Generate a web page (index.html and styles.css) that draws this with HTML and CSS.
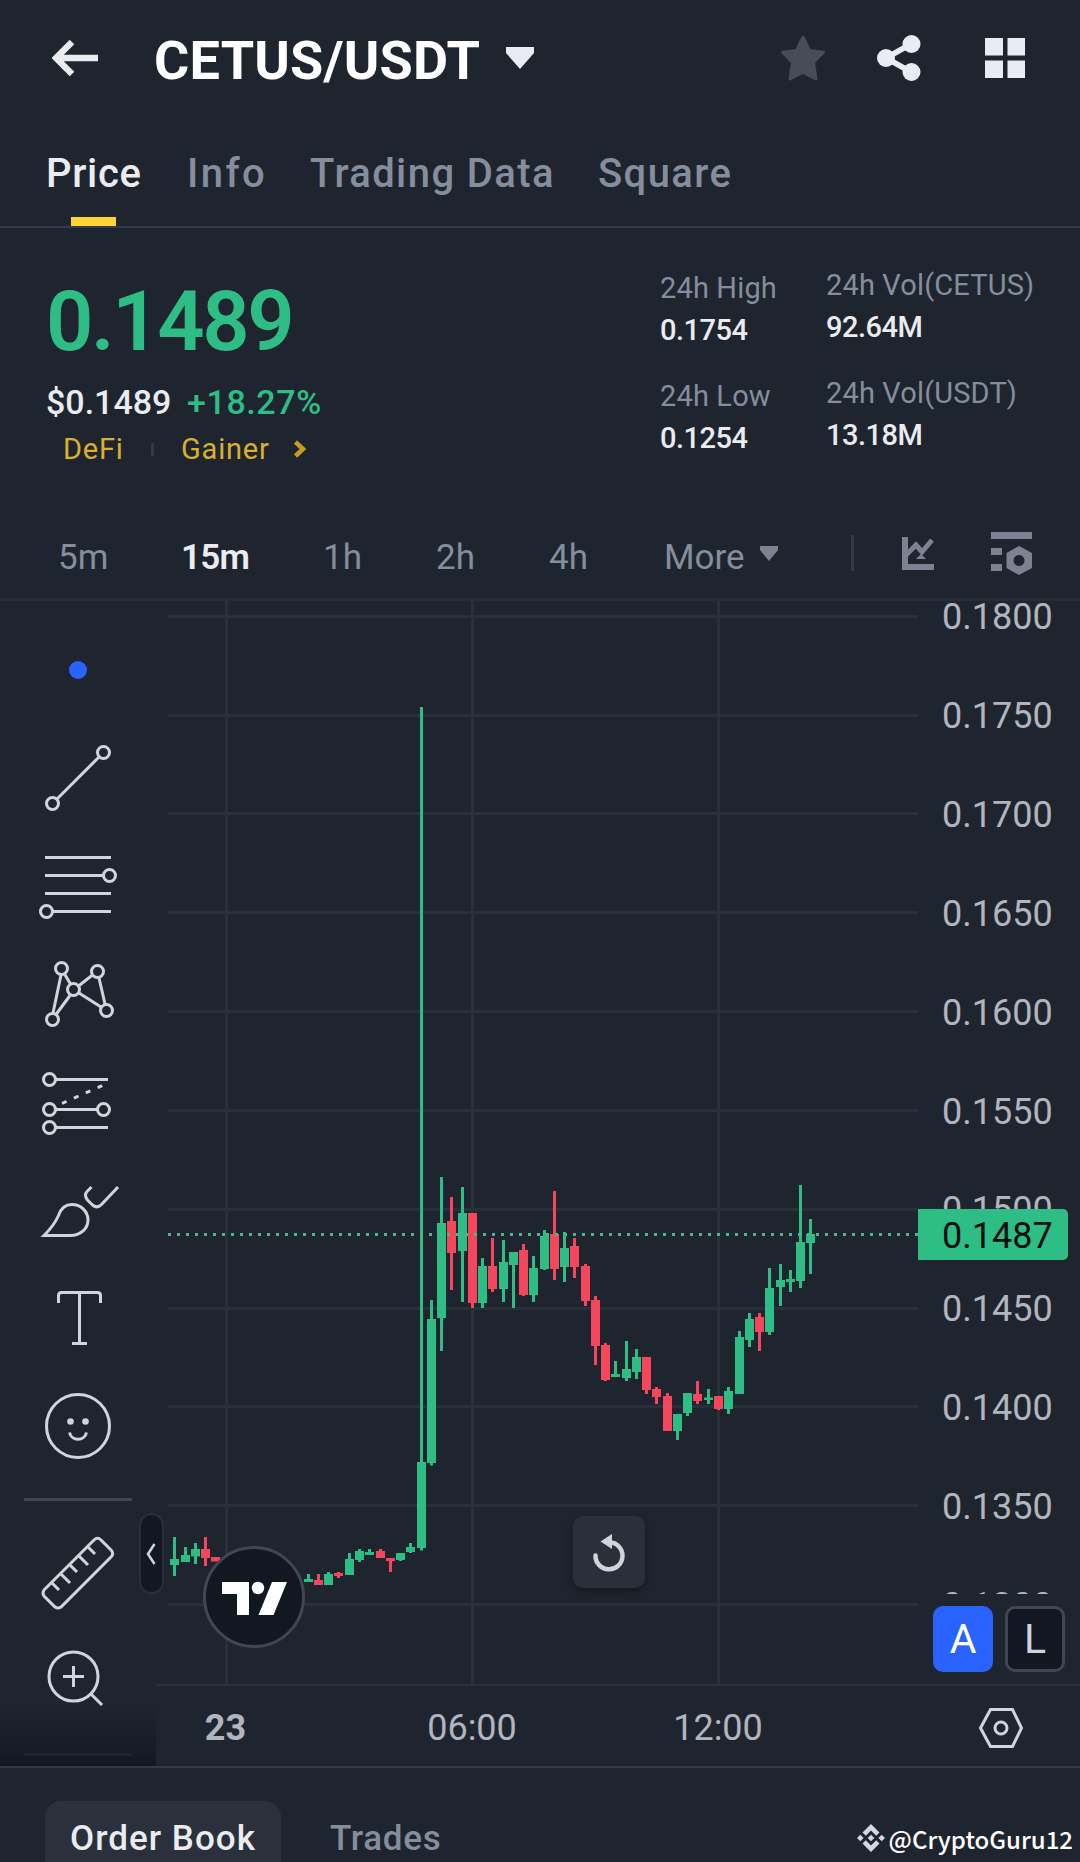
FILE: index.html
```
<!DOCTYPE html>
<html lang="en">
<head>
  <meta charset="UTF-8">
  <meta name="viewport" content="width=device-width, initial-scale=1.0">
  <title>CETUS/USDT</title>
  <link rel="stylesheet" href="styles.css">
</head>
<body>

  <!-- Header -->
  <header class="header">
    <svg class="back" width="46" height="38" viewBox="0 0 46 38"><path d="M46 19H5M20 3L4 19l16 16" fill="none" stroke="#eaecef" stroke-width="6.5"/></svg>
    <h1>CETUS/USDT</h1>
    <svg class="caret" width="28" height="22" viewBox="0 0 28 22"><path d="M0 0h28v6L14 22 0 6z" fill="#eaecf3"/></svg>
    <div class="header-icons">
      <svg width="46" height="48" viewBox="0 0 46 48"><path d="M23 3l6.5 13.5 14 1.7-10 10.2 2.5 16.6L23 38.500 10 45l2.500-16.600L2.500 18.200l14-1.700z" fill="#474d57" stroke="#474d57" stroke-width="3" stroke-linejoin="round"/></svg>
      <svg width="44" height="48" viewBox="0 0 44 48"><path d="M34 10L9 24l25 14" fill="none" stroke="#eaecf3" stroke-width="5.500"/><circle cx="34.500" cy="10" r="9" fill="#eaecf3"/><circle cx="9" cy="24" r="9" fill="#eaecf3"/><circle cx="34.500" cy="38" r="9" fill="#eaecf3"/></svg>
      <svg width="40" height="40" viewBox="0 0 40 40"><path d="M0 0h18v17.500H0zM22.500 0h17.500v17.500H22.500zM0 22.500h18V40H0zM22.500 22.500h17.500V40H22.500z" fill="#eaecf3"/></svg>
    </div>
  </header>

  <!-- Tabs -->
  <nav class="tabs">
    <a class="tab active">Price</a>
    <a class="tab info-tab">Info</a>
    <a class="tab data-tab">Trading Data</a>
    <a class="tab square-tab">Square</a>
  </nav>

  <!-- Price summary -->
  <section class="summary">
    <div class="price-box">
      <div class="price">0.1489</div>
      <div class="change"><span class="usd">$0.1489</span><span class="percent">+18.27%</span></div>
      <div class="tags">
        <span class="tag-defi">DeFi</span>
        <i class="tag-line"></i>
        <span class="tag-gainer">Gainer</span>
        <svg width="14" height="18" viewBox="0 0 14 18"><path d="M2.500 2l7.500 7-7.500 7" fill="none" stroke="#c99a22" stroke-width="4.500"/></svg>
      </div>
    </div>
    <div class="stats">
      <div class="label">24h High</div>
      <div class="value">0.1754</div>
      <div class="label second">24h Low</div>
      <div class="value">0.1254</div>
    </div>
    <div class="stats volume">
      <div class="label">24h Vol(CETUS)</div>
      <div class="value">92.64M</div>
      <div class="label second">24h Vol(USDT)</div>
      <div class="value">13.18M</div>
    </div>
  </section>

  <!-- Timeframes -->
  <div class="timeframes">
    <span>5m</span>
    <span class="active">15m</span>
    <span>1h</span>
    <span>2h</span>
    <span>4h</span>
    <span class="more">More <svg width="18" height="15" viewBox="0 0 18 15"><path d="M0 0h18v4L9 15 0 4z" fill="#7c8291"/></svg></span>
    <i class="bar-line"></i>
    <svg class="chart-type" width="32" height="33" viewBox="0 0 32 33"><path d="M0 0h6v27h26v6H0z" fill="#7c8291"/><path d="M4 18L14 8l6 7L30 3" fill="none" stroke="#7c8291" stroke-width="5"/><path d="M14 22l5-5 5 5z" fill="#7c8291"/></svg>
    <svg class="chart-settings" width="41" height="43" viewBox="0 0 41 43"><path fill="#7c8291" fill-rule="evenodd" d="M0 0h41v7H0zM0 16h11v7H0zM0 32h11v7H0zM28 14l13 7v15l-13 7-12.500-7V21zM28 23a5.500 5.500 0 1 0 .1 0z"/></svg>
  </div>

  <!-- Chart -->
  <main class="chart">
    <aside class="tools">
      <svg width="156" height="108" viewBox="0 0 156 108"><circle cx="78" cy="54" r="9" fill="#2962ff"/></svg>
      <svg class="tool" width="156" height="108" viewBox="0 0 156 108"><circle cx="52.500" cy="79.500" r="6"/><circle cx="103.500" cy="28.500" r="6"/><path d="M57 75l42-42"/></svg>
      <svg class="tool" width="156" height="108" viewBox="0 0 156 108"><path d="M45 25.500h66M45 43.500h58M45 61.500h66M53 79.500h58"/><circle cx="109.500" cy="43.500" r="6"/><circle cx="46.500" cy="79.500" r="6"/></svg>
      <svg class="tool" width="156" height="108" viewBox="0 0 156 108"><circle cx="61.500" cy="28.500" r="6"/><circle cx="97.500" cy="31.500" r="6"/><circle cx="73.500" cy="49.500" r="6"/><circle cx="106.500" cy="70.500" r="6"/><circle cx="52.500" cy="79.500" r="6"/><path d="M61 35l-8 38M64.500 34l6 10M56 74.500l14-19M78.500 46l14-11M79 53l22 14M99 38l6 26"/></svg>
      <svg class="tool" width="156" height="108" viewBox="0 0 156 108"><path d="M56 31.500h52M56 61.500h41M56 79.500h52"/><circle cx="49.500" cy="31.500" r="6"/><circle cx="49.500" cy="61.500" r="6"/><circle cx="103.500" cy="61.500" r="6"/><circle cx="49.500" cy="79.500" r="6"/><path d="M62 55.500l43-19" stroke-dasharray="5 8"/></svg>
      <svg class="tool" width="156" height="108" viewBox="0 0 156 108"><path d="M44 79.500c7-7 11-12 14.500-20C61 52 66 48.500 72 48.500c9 0 16 7 16 15.500S81 79.500 70 79.500z"/><path d="M91.500 31l-4 4c-3 3-2.500 6 0 9l5 5c3 2.500 6 2.500 9-.500L118 31"/></svg>
      <svg class="tool" width="156" height="108" viewBox="0 0 156 108"><path d="M58.500 39v-7.500q0-3 3-3h36q3 0 3 3V39M79.500 28.500v51M72 79.500h15"/></svg>
      <svg class="tool" width="156" height="108" viewBox="0 0 156 108"><circle cx="78" cy="54" r="31.500"/><path d="M69.500 60.500a8.700 8.700 0 0 0 17 0"/><circle class="dot" cx="70.500" cy="49.500" r="3.300"/><circle class="dot" cx="85.500" cy="49.500" r="3.300"/></svg>
      <i class="tools-line"></i>
      <svg class="tool" width="156" height="108" viewBox="0 0 156 108"><path d="M44 71l50-50q3.500-3.500 7 0l10 10q3.500 3.500 0 7L61 88q-3 2-6 0L44 77q-2-3 0-6zM52 64l7 7M61 55l9 9M70 46l7 7M79 37l9 9M88 28l7 7"/></svg>
      <svg class="tool" width="156" height="108" viewBox="0 0 156 108"><circle cx="73.500" cy="49.500" r="24.500"/><path d="M63 49.500h21M73.500 39v21M91 67l11 11"/></svg>
      <div class="tools-fade"><i class="tools-line"></i></div>
    </aside>

    <div class="plot">
      <svg width="762" height="1083" viewBox="156 601 762 1083">
        <!-- Grid -->
        <path class="grid" d="M168 616.500h750M168 715.500h750M168 813.500h750M168 912.500h750M168 1011.500h750M168 1110.500h750M168 1209.500h750M168 1308.500h750M168 1406.500h750M168 1505.500h750M168 1604.500h750M226.500 598v1088M472.500 598v1088M718.500 598v1088"/>
        <!-- Rising candles -->
        <path class="wick up" d="M174.500 1537V1576M185.500 1547V1562M195.500 1543V1564M308.500 1574V1582M328.500 1572V1585M349.500 1553V1575M359.500 1549V1562M369.500 1549V1555M400.500 1553V1561M410.500 1543V1553M421.500 707V1550.500M431.500 1300V1465.500M441.500 1177V1351M462.500 1187V1302M482.500 1258V1308M503.500 1240V1302M513.500 1252V1308M533.500 1256V1302M544.500 1230V1270M564.500 1232V1282M615.500 1361V1377M626.500 1341V1381M636.500 1349V1379M677.500 1414V1440M687.500 1393V1416M708.500 1389V1404M728.500 1387V1414M739.500 1331V1394M749.500 1313V1347M769.500 1268V1335M780.500 1264V1306M790.500 1270V1292M800.500 1185V1288M810.500 1219V1274"/>
        <path class="candle up" d="M174.500 1559V1565M185.500 1555V1562M195.500 1549V1556.500M308.500 1579V1582M328.500 1574V1585M349.500 1559V1575M359.500 1551V1560M369.500 1552V1555M400.500 1553V1560M410.500 1547V1552M421.500 1462V1548M431.500 1319V1463M441.500 1223V1318M462.500 1213V1251M482.500 1266V1303M503.500 1262V1289M513.500 1252V1265M533.500 1268V1295M544.500 1236V1269M564.500 1248V1267M615.500 1374V1377M626.500 1369V1378M636.500 1357V1372M677.500 1414V1431M687.500 1393V1413M708.500 1397.500V1400M728.500 1391V1409M739.500 1337V1394M749.500 1319V1340M769.500 1288V1332M780.500 1280V1287M790.500 1279V1282M800.500 1242V1281M810.500 1234V1243"/>
        <!-- Falling candles -->
        <path class="wick down" d="M205.500 1537V1566M318.500 1574V1585M338.500 1572V1578M380.500 1549V1558M390.500 1558V1572M451.500 1197V1290M472.500 1213V1308M492.500 1238V1292M523.500 1244V1296M554.500 1191V1280M574.500 1238V1278M585.500 1264V1306M595.500 1296V1365M605.500 1343V1381M646.500 1357V1394M656.500 1387V1404M667.500 1393V1431M697.500 1381V1404M718.500 1396V1410M759.500 1313V1351"/>
        <path class="candle down" d="M205.500 1549V1558M215.500 1557V1561.500M318.500 1580V1585M338.500 1573V1576M380.500 1551V1558M390.500 1558V1561M451.500 1221V1253M472.500 1213V1303M492.500 1266V1289M523.500 1250V1295M554.500 1234V1269M574.500 1246V1267M585.500 1266V1301M595.500 1300V1346M605.500 1345V1380M646.500 1357V1390M656.500 1389V1397M667.500 1396V1431M697.500 1394V1401M718.500 1396V1409M759.500 1317V1332"/>
        <!-- Last price -->
        <path d="M168 1234.500h750" stroke="#4bb58c" stroke-width="3" stroke-dasharray="3 6"/>
      </svg>
      <svg class="logo" width="102" height="102" viewBox="0 0 102 102"><circle cx="51" cy="51" r="49.500" fill="#131722" stroke="#434651" stroke-width="3"/><path d="M19 36h27v33H34V48H19zM69 36h15L70.500 69H55.500z" fill="#fff"/><circle cx="55" cy="42" r="6.200" fill="#fff"/></svg>
      <div class="reset"><svg width="36" height="40" viewBox="0 0 36 40"><path d="M4.500 22.500a13.500 13.500 0 1 0 14-13.200" fill="none" stroke="#d1d4dc" stroke-width="4.500" stroke-linecap="round"/><path d="M9.500 8.500L21 1v15z" fill="#d1d4dc"/></svg></div>
    </div>

    <div class="price-axis">
      <div class="prices">
        <span>0.1800</span>
        <span>0.1750</span>
        <span>0.1700</span>
        <span>0.1650</span>
        <span>0.1600</span>
        <span>0.1550</span>
        <span>0.1500</span>
        <span>0.1450</span>
        <span>0.1400</span>
        <span>0.1350</span>
        <span>0.1300</span>
      </div>
      <div class="last-price">0.1487</div>
      <div class="scale-buttons">
        <button class="auto">A</button>
        <button class="log">L</button>
      </div>
    </div>

    <div class="time-axis">
      <b>23</b>
      <span>06:00</span>
      <span>12:00</span>
    </div>
    <div class="axis-settings"><svg width="46" height="42" viewBox="0 0 46 42"><path d="M12.500 2.500h22L43.500 21l-9 18.500h-22L2.500 21z" fill="none" stroke="#d1d4dc" stroke-width="3"/><circle cx="23" cy="21" r="6" fill="none" stroke="#d1d4dc" stroke-width="3"/></svg></div>

    <div class="collapse"><svg width="10" height="22" viewBox="0 0 10 22"><path d="M8.500 1L2 11l6.500 10" fill="none" stroke="#d1d4dc" stroke-width="2.500"/></svg></div>
  </main>

  <!-- Bottom tabs -->
  <footer class="bottom">
    <div class="order-book">Order Book</div>
    <div class="trades">Trades</div>
    <div class="author">
      <svg width="28" height="28" viewBox="0 0 28 28"><path d="M14 0l8.500 8.500-3.300 3.300L14 6.600l-5.200 5.200-3.300-3.300zM14 28l8.500-8.500-3.300-3.300L14 21.400l-5.200-5.200-3.300 3.300zM14 10.700l3.300 3.300-3.300 3.300-3.300-3.300zM3.300 10.700L6.600 14l-3.300 3.300L0 14zM24.700 10.700L28 14l-3.300 3.300-3.300-3.300z" fill="#d5d8e2"/></svg>
      <span>@CryptoGuru12</span>
    </div>
  </footer>

</body>
</html>
```
FILE: styles.css
```
/* Basic Reset */
* {
  margin: 0;
  padding: 0;
  box-sizing: border-box;
}

body {
  width: 1080px;
  height: 1862px;
  overflow: hidden;
  background-color: #1f252f;
  color: #eaecef;
  font-family: Roboto, "Liberation Sans", sans-serif;
}

svg {
  display: block;
  flex-shrink: 0;
}

span, .label, .value, .tab {
  white-space: nowrap;
}

/* Header */
.header {
  height: 116px;
  padding: 0 55px 0 52px;
  display: flex;
  align-items: center;
}

.header h1 {
  width: 348px;
  margin-left: 56px;
  padding-top: 5px;
  font-size: 54px;
  font-weight: 700;
  letter-spacing: 0.2px;
  color: #fff;
}

.caret {
  margin-left: 4px;
}

.header-icons {
  margin-left: auto;
  display: flex;
  align-items: center;
}

.header-icons svg + svg {
  margin-left: 51px;
}

.header-icons svg:last-child {
  margin-left: 64px;
}

/* Tabs */
.tabs {
  height: 112px;
  padding-left: 46px;
  display: flex;
  border-bottom: 2px solid #343a44;
}

.tab {
  height: 110px;
  padding-top: 5px;
  line-height: 106px;
  font-size: 40px;
  font-weight: 500;
  letter-spacing: 1.4px;
  color: #848e9c;
}

.tab.active {
  width: 141px;
  letter-spacing: 0.7px;
  color: #eaecef;
  background: linear-gradient(#fcd535, #fcd535) 25px 101px / 45px 9px no-repeat;
}

.info-tab {
  width: 123px;
  letter-spacing: 2.4px;
}

.data-tab {
  width: 288px;
}

/* Price summary */
.summary {
  height: 288px;
  padding-left: 46px;
  display: grid;
  grid-template-columns: 614px 166px 1fr;
}

.price-box {
  padding-top: 49px;
}

.price {
  height: 90px;
  line-height: 90px;
  font-size: 83px;
  font-weight: 600;
  letter-spacing: -2.4px;
  color: #2ebd85;
}

.change {
  display: flex;
  margin-top: 15px;
  line-height: 40px;
  font-size: 34px;
  font-weight: 500;
}

.usd {
  width: 141px;
}

.percent {
  letter-spacing: 0.6px;
  color: #2ebd85;
}

.tags {
  display: flex;
  align-items: center;
  margin: 9px 0 0 17px;
  line-height: 36px;
  font-size: 29px;
  letter-spacing: 0.8px;
  color: #dcaf2c;
}

.tag-defi {
  width: 88px;
}

.tag-line {
  width: 3px;
  height: 13px;
  background-color: #343a44;
}

.tag-gainer {
  width: 112px;
  margin-left: 27px;
}

.stats {
  padding-top: 39px;
  line-height: 42px;
  font-size: 29px;
}

.volume {
  padding-top: 36px;
}

.label {
  letter-spacing: 0.15px;
  color: #848e9c;
}

.label.second {
  margin-top: 24px;
}

.value {
  font-weight: 500;
  letter-spacing: -0.5px;
}

/* Timeframes */
.timeframes {
  height: 85px;
  padding-left: 58px;
  display: grid;
  grid-template-columns: 123px 142px 113px 113px 115px 187px 51px 89px 1fr;
  align-items: center;
  border-bottom: 3px solid #272d37;
  font-size: 35px;
  color: #848e9c;
}

.timeframes .active {
  font-weight: 600;
  letter-spacing: -0.8px;
  color: #eaecef;
}

.more {
  display: flex;
  align-items: center;
  gap: 15px;
}

.more svg {
  margin-top: -8px;
}

.bar-line {
  width: 3px;
  height: 36px;
  margin-top: -8px;
  background-color: #343a44;
}

.chart-type, .chart-settings {
  margin-top: -8px;
}

/* Chart */
.chart {
  position: relative;
  display: grid;
  grid-template-columns: 156px 762px 162px;
  grid-template-rows: 1083px 82px;
  border-bottom: 2px solid #343a44;
  height: 1167px;
}

.tools {
  position: relative;
  grid-row: 1 / 3;
  height: 1165px;
  padding-top: 15px;
  overflow: hidden;
}

.tool {
  fill: none;
  stroke: #d1d4dc;
  stroke-width: 3;
}

.tool .dot {
  fill: #d1d4dc;
  stroke: none;
}

.tools-line {
  display: block;
  width: 108px;
  height: 3px;
  margin: 18px 24px;
  background-color: #434651;
}

.tools-fade {
  position: absolute;
  left: 0;
  bottom: 0;
  width: 156px;
  height: 62px;
  padding-top: 49px;
  background: linear-gradient(rgba(19, 23, 34, 0), #131722);
}

.tools-fade .tools-line {
  margin: 0 24px;
  background-color: #1e222d;
}

.plot {
  position: relative;
}

.grid {
  stroke: #2a303a;
  stroke-width: 3;
}

.wick {
  stroke-width: 3;
}

.candle {
  stroke-width: 9;
}

.up {
  stroke: #2ebd85;
}

.down {
  stroke: #f6465d;
}

.logo {
  position: absolute;
  left: 46.5px;
  top: 945px;
}

.reset {
  position: absolute;
  left: 417px;
  top: 915px;
  width: 72px;
  height: 72px;
  padding: 17px 0 0 18px;
  border-radius: 10px;
  background-color: #2a303a;
  box-shadow: 0 4px 10px rgba(0, 0, 0, 0.35);
}

.collapse {
  position: absolute;
  left: 139px;
  top: 912px;
  width: 25px;
  height: 81px;
  padding-right: 1px;
  display: flex;
  align-items: center;
  justify-content: center;
  border: 2px solid #2a2e39;
  border-radius: 12px;
  background-color: #131722;
}

.price-axis {
  position: relative;
  font-size: 36px;
  color: #b2b5be;
}

.prices {
  height: 993px;
  overflow: hidden;
}

.prices span {
  display: block;
  height: 98.85px;
  padding-left: 24px;
  line-height: 98.85px;
}

.prices span:first-child {
  margin-top: -32.6px;
}

.last-price {
  position: absolute;
  left: 0;
  top: 608px;
  width: 150px;
  height: 51px;
  padding-left: 24px;
  border-radius: 0 5px 5px 0;
  line-height: 54px;
  background-color: #2ebd85;
  color: #0b0e11;
}

.scale-buttons {
  display: flex;
  gap: 12px;
  margin: 12px 0 0 15px;
}

.scale-buttons button {
  width: 60px;
  height: 66px;
  border: 3px solid #434651;
  border-radius: 10px;
  background-color: #131722;
  color: #d1d4dc;
  font-family: inherit;
  font-size: 41px;
}

.scale-buttons .auto {
  border-color: #2962ff;
  background-color: #2962ff;
  color: #fff;
}

.time-axis {
  padding-left: 9px;
  display: flex;
  border-top: 2px solid #2a303a;
  line-height: 85px;
  font-size: 36px;
  color: #b2b5be;
}

.time-axis b, .time-axis span {
  width: 246px;
  text-align: center;
}

.time-axis b {
  width: 121px;
  margin-right: 63px;
}

.axis-settings {
  padding: 21px 0 0 60px;
  border-top: 2px solid #2a303a;
}

/* Bottom tabs */
.bottom {
  height: 94px;
  padding: 33px 7px 0 45px;
  display: flex;
  overflow: hidden;
  font-size: 35px;
  font-weight: 500;
}

.order-book {
  width: 236px;
  height: 80px;
  border-radius: 16px;
  background-color: #2b313c;
  line-height: 76px;
  letter-spacing: 1px;
  text-align: center;
}

.trades {
  margin-left: 49px;
  line-height: 76px;
  letter-spacing: 0.7px;
  color: #848e9c;
}

.author {
  margin-left: auto;
  height: 74px;
  display: flex;
  align-items: center;
  gap: 4px;
  font-family: "Noto Sans CJK SC", "Noto Sans", sans-serif;
  font-size: 24px;
  color: #fff;
}
```
